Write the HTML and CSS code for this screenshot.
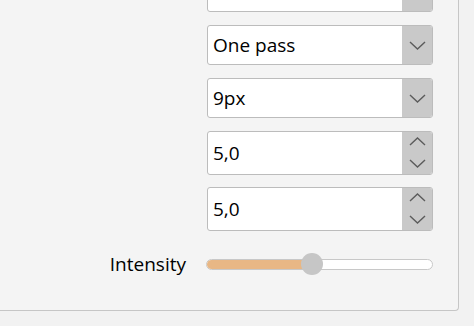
FILE: index.html
```html
<!DOCTYPE html>
<html lang="en">
<head>
    <meta charset="UTF-8">
    <title>Filter settings</title>
    <link rel="stylesheet" href="styles.css">
</head>
<body>
<div class="panel">
    <div class="row">
        <div class="label"></div>
        <div class="combo">
            <span class="value">Normal</span>
            <div class="btn">
                <svg width="17" height="9" viewBox="0 0 17 9"><polyline points="1,1 8.5,8 16,1"/></svg>
            </div>
        </div>
    </div>
    <div class="row">
        <div class="label"></div>
        <div class="combo">
            <span class="value">One pass</span>
            <div class="btn">
                <svg width="17" height="9" viewBox="0 0 17 9"><polyline points="1,1 8.5,8 16,1"/></svg>
            </div>
        </div>
    </div>
    <div class="row">
        <div class="label"></div>
        <div class="combo">
            <span class="value">9px</span>
            <div class="btn">
                <svg width="17" height="9" viewBox="0 0 17 9"><polyline points="1,1 8.5,8 16,1"/></svg>
            </div>
        </div>
    </div>
    <div class="row">
        <div class="label"></div>
        <div class="spin">
            <span class="value">5,0</span>
            <div class="btn spin-btn">
                <svg width="17" height="9" viewBox="0 0 17 9"><polyline points="1,8 8.5,1 16,8"/></svg>
                <svg width="17" height="9" viewBox="0 0 17 9"><polyline points="1,1 8.5,8 16,1"/></svg>
            </div>
        </div>
    </div>
    <div class="row row-tight">
        <div class="label"></div>
        <div class="spin">
            <span class="value">5,0</span>
            <div class="btn spin-btn">
                <svg width="17" height="9" viewBox="0 0 17 9"><polyline points="1,8 8.5,1 16,8"/></svg>
                <svg width="17" height="9" viewBox="0 0 17 9"><polyline points="1,1 8.5,8 16,1"/></svg>
            </div>
        </div>
    </div>
    <div class="row row-slider">
        <div class="label">Intensity</div>
        <div class="slider">
            <div class="track">
                <div class="fill" style="width: 106px"></div>
            </div>
            <div class="handle" style="left: 95px"></div>
        </div>
    </div>
</div>
</body>
</html>
```

FILE: styles.css
```css
* {
    margin: 0;
    padding: 0;
    box-sizing: border-box;
}

body {
    background: #f2f2f2;
    font-family: "Open Sans", "Noto Sans", sans-serif;
    font-size: 19px;
    color: #000;
    overflow: hidden;
}

.panel {
    width: 459px;
    margin-top: -28px;
    padding: 0 25px 33px 0;
    background: #f4f4f4;
    border-right: 1px solid #c6c6c6;
    border-bottom: 1px solid #c6c6c6;
    border-bottom-right-radius: 4px;
    display: flex;
    flex-direction: column;
    gap: 13px;
}

.row {
    display: flex;
    align-items: center;
    gap: 21px;
}

.row-tight {
    margin-top: -1px;
}

.row-slider {
    margin-top: 7px;
}

.label {
    width: 186px;
    text-align: right;
}

.combo, .spin {
    width: 226px;
    height: 40px;
    display: flex;
    background: #fff;
    border: 1px solid #bcbcbc;
    border-radius: 3px;
    overflow: hidden;
}

.spin {
    height: 44px;
}

.value {
    flex: 1;
    display: flex;
    align-items: center;
    padding-left: 5px;
}

.btn {
    width: 30px;
    background: #c9c9c9;
    display: flex;
    align-items: center;
    justify-content: center;
}

.spin-btn {
    flex-direction: column;
    justify-content: space-between;
    padding: 5px 0 6px;
}

.btn svg polyline {
    fill: none;
    stroke: #5c5c5c;
    stroke-width: 1.4;
}

.slider {
    width: 227px;
    height: 22px;
    margin-left: -1px;
    position: relative;
    display: flex;
    align-items: center;
}

.track {
    width: 100%;
    height: 11px;
    background: #fff;
    border: 1px solid #c8c8c8;
    border-radius: 6px;
    overflow: hidden;
}

.fill {
    height: 100%;
    background: #e8b785;
}

.handle {
    position: absolute;
    top: 0;
    width: 22px;
    height: 22px;
    border-radius: 50%;
    background: #c6c6c6;
}
```
